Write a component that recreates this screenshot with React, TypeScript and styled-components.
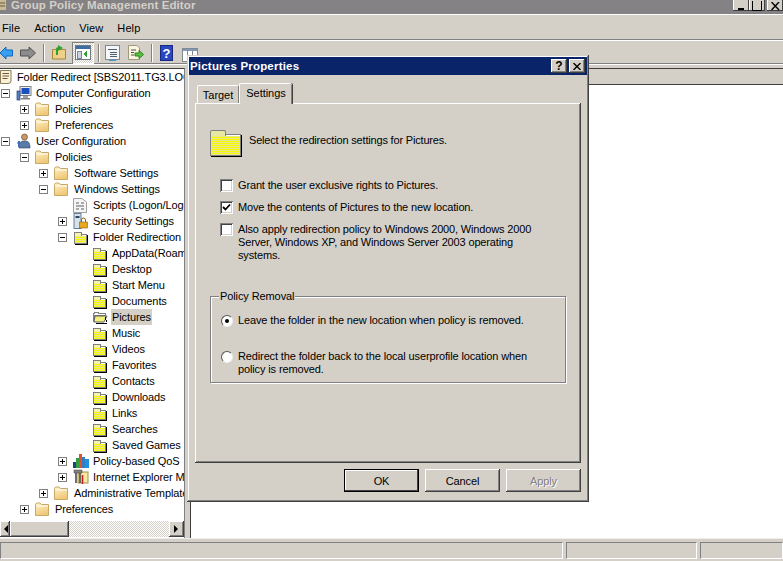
import React from "react";
import styled, { createGlobalStyle } from "styled-components";

const Global = createGlobalStyle`
  html, body { margin: 0; padding: 0; background: #fff; overflow: hidden; }
  * { box-sizing: border-box; }
  body { font-family: "Liberation Sans", Arial, sans-serif; font-size: 11px; color: #000; }
`;

const face = "#d4d0c8";
const raised = "inset -1px -1px 0 #404040, inset 1px 1px 0 #fff, inset -2px -2px 0 #808080";
const dither = "repeating-conic-gradient(#d4d0c8 0 25%, #fff 0 50%) 0 0 / 2px 2px";
const yellowDither = "repeating-conic-gradient(#f8f800 0 25%, #e6e68c 0 50%) 0 0 / 2px 2px";

const Screen = styled.div`
  position: relative; width: 783px; height: 561px; overflow: hidden;
  display: flex; flex-direction: column; background: ${face};
`;
const TitleBar = styled.div`
  height: 14px; background: #848284; display: flex; align-items: center;
  justify-content: space-between; overflow: hidden; flex: none;
`;
const TitleText = styled.div`
  display: flex; align-items: center; gap: 5px; height: 11px; color: ${face};
  font-weight: bold; font-size: 11.5px; letter-spacing: 0.1px; margin-top: -4px; line-height: 11px;
`;
const WindowButtons = styled.div`
  display: flex; align-self: flex-start; height: 11px;
`;
const WindowButton = styled.div<{ $left?: number }>`
  width: 16px; height: 11px; background: ${face}; display: flex; align-items: flex-end; justify-content: center;
  margin-left: ${(p) => p.$left ?? 0}px;
  box-shadow: inset -1px -1px 0 #404040, inset 1px 0 0 #fff;
`;
const MenuBar = styled.div`
  height: 26px; flex: none; display: flex; gap: 14px; padding: 6px 0 0 2px;
  border-top: 1px solid #fff; border-bottom: 1px solid #808080;
  box-shadow: inset 0 1px 0 #d4d0c8; line-height: 14px; font-size: 11px; letter-spacing: 0.1px;
`;
const Toolbar = styled.div`
  height: 25px; flex: none; display: flex; align-items: center;
  border-top: 1px solid #fff; border-bottom: 1px solid #fff; box-shadow: inset 0 -1px 0 #808080;
`;
const ToolSlot = styled.div<{ $left: number; $pressed?: boolean }>`
  margin-left: ${(p) => p.$left}px; display: flex; align-items: center; justify-content: center; flex: none;
  ${(p) =>
    p.$pressed
      ? `width: 22px; height: 22px; background: ${dither}; box-shadow: inset 1px 1px 0 #808080, inset -1px -1px 0 #fff;`
      : ""}
`;
const ToolSep = styled.div<{ $left: number }>`
  margin-left: ${(p) => p.$left}px; width: 2px; height: 18px; flex: none; border-left: 1px solid #808080; border-right: 1px solid #fff;
`;
const Work = styled.div`
  flex: 1; min-height: 0; display: flex; margin-top: 3px;
`;
const TreePane = styled.div`
  width: 185px; flex: none; display: flex; flex-direction: column; background: #fff;
  border-top: 1px solid #404040; border-right: 1px solid #808080;
`;
const TreeList = styled.div`
  flex: 1; min-height: 0; overflow: hidden;
`;
const Row = styled.div<{ $level: number }>`
  height: 16px; display: flex; align-items: center; white-space: nowrap;
  margin-left: ${(p) => p.$level * 19 + 1}px;
`;
const ExpanderSlot = styled.div`
  width: 15px; flex: none; display: flex; align-items: center;
`;
const Expander = styled.div<{ $open: boolean }>`
  position: relative; width: 9px; height: 9px; border: 1px solid #808080; background: #fff;
  &::before { content: ""; position: absolute; left: 1px; top: 3px; width: 5px; height: 1px; background: #000; }
  &::after { content: ""; position: absolute; left: 3px; top: 1px; width: 1px; height: 5px; background: #000;
    display: ${(p) => (p.$open ? "none" : "block")}; }
`;
const IconSlot = styled.div`
  width: 20px; height: 16px; flex: none; display: flex; align-items: center;
`;
const Label = styled.span<{ $selected?: boolean }>`
  height: 16px; line-height: 16px; padding: 0 1.5px; margin-left: -1.5px; font-size: 11px; letter-spacing: -0.1px;
  background: ${(p) => (p.$selected ? face : "transparent")};
`;
const ScrollBar = styled.div`
  height: 16px; flex: none; margin-bottom: 1px; display: flex; background: ${dither};
`;
const ScrollButton = styled.div<{ $w: number }>`
  width: ${(p) => p.$w}px; flex: none; background: ${face}; box-shadow: ${raised};
  display: flex; align-items: center; justify-content: center;
`;
const ScrollThumb = styled.div`
  width: 59px; flex: none; background: ${face}; box-shadow: ${raised};
`;
const ScrollTrack = styled.div`
  flex: 1;
`;
const Splitter = styled.div`
  width: 5px; flex: none; background: ${face};
`;
const RightPane = styled.div`
  flex: 1; display: flex; flex-direction: column; background: #fff; border-left: 1px solid #404040; border-top: 1px solid #404040;
`;
const RightHeader = styled.div`
  height: 16px; flex: none; background: ${face}; border-bottom: 1px solid #404040;
`;
const StatusBar = styled.div`
  height: 23px; flex: none; display: flex; gap: 3px; padding: 3px 0 2px; border-top: 1px solid #eee;
`;
const StatusCell = styled.div<{ $w?: number }>`
  ${(p) => (p.$w ? `width: ${p.$w}px; flex: none;` : "flex: 1;")}
  border-top: 1px solid #808080; border-left: 1px solid #808080; border-bottom: 1px solid #fff; border-right: 1px solid #fff;
`;

/* Dialog: a window lying over the main window */
const Dialog = styled.div`
  position: absolute; left: 187px; top: 55px; width: 402px; height: 447px; padding: 2px;
  background: ${face}; display: flex; flex-direction: column;
  box-shadow: inset -1px -1px 0 #404040, inset 1px 1px 0 #d4d0c8, inset -2px -2px 0 #808080, inset 2px 2px 0 #fff;
`;
const Caption = styled.div`
  height: 18px; flex: none; background: #0a246a; color: #fff; display: flex; align-items: center;
  justify-content: space-between; padding: 0 2px 0 1px; font-weight: bold; font-size: 11.5px; letter-spacing: 0.2px;
`;
const CaptionButtons = styled.div`
  display: flex; gap: 2px;
`;
const CaptionButton = styled.div`
  width: 16px; height: 14px; background: ${face}; box-shadow: ${raised}; color: #000;
  display: flex; align-items: center; justify-content: center; font-weight: bold; font-size: 12px; line-height: 14px;
`;
const TabBar = styled.div`
  height: 20px; margin-top: 8px; padding-left: 8px; flex: none; display: flex; align-items: flex-end; position: relative; z-index: 1;
`;
const Tab = styled.div<{ $active?: boolean; $w: number }>`
  width: ${(p) => p.$w}px; height: ${(p) => (p.$active ? 21 : 18)}px; background: ${face};
  margin-bottom: ${(p) => (p.$active ? -1 : 0)}px;
  display: flex; align-items: center; justify-content: center; padding-bottom: ${(p) => (p.$active ? 3 : 0)}px;
  border-top: 1px solid #fff; border-left: 1px solid #fff; font-size: 11px; letter-spacing: -0.05px;
  border-radius: 2px 2px 0 0;
  ${(p) => (p.$active ? "box-shadow: inset -1px 0 0 #808080, 1px 0 0 #404040;" : "border-right: 1px solid #808080;")}
`;
const Panel = styled.div`
  margin: 0 6px; height: 360px; flex: none; padding: 26px 15px 0;
  box-shadow: inset -1px -1px 0 #404040, inset 1px 1px 0 #fff, inset -2px -2px 0 #808080;
  display: flex; flex-direction: column;
`;
const HeaderRow = styled.div`
  display: flex; align-items: flex-start; gap: 8px; height: 27px; font-size: 11px; letter-spacing: -0.18px;
  line-height: 13px;
`;
const HeaderText = styled.span`
  padding-top: 5px;
`;
const Options = styled.div`
  margin: 23px 0 0 10px; width: 318px; display: flex; flex-direction: column; gap: 9px;
`;
const Option = styled.div`
  display: flex; gap: 5px; align-items: flex-start; line-height: 13px; font-size: 11px; letter-spacing: -0.15px;
`;
const Check = styled.div`
  width: 13px; height: 13px; flex: none; background: #fff; display: flex; align-items: center; justify-content: center;
  box-shadow: inset 1px 1px 0 #808080, inset -1px -1px 0 #fff, inset 2px 2px 0 #404040, inset -2px -2px 0 #d4d0c8;
`;
const Group = styled.div`
  position: relative; margin-top: 34px; width: 356px; height: 87px; padding: 17px 0 0 10px;
  border: 1px solid #808080; box-shadow: 1px 1px 0 #fff, inset 1px 1px 0 #fff;
  display: flex; flex-direction: column; gap: 23px;
`;
const Legend = styled.div`
  position: absolute; left: 8px; top: -7px; padding: 0 1px; line-height: 13px; background: ${face}; font-size: 11px; letter-spacing: -0.1px;
`;
const RadioRow = styled.div`
  display: flex; gap: 5px; align-items: flex-start; line-height: 13px; font-size: 11px; letter-spacing: -0.13px; width: 320px;
`;
const Radio = styled.div<{ $on?: boolean }>`
  width: 12px; height: 12px; flex: none; border-radius: 50%; background: #fff; margin-top: 1px;
  border: 1px solid; border-color: #555 #eee #eee #555;
  display: flex; align-items: center; justify-content: center;
  &::after { content: ""; width: 4px; height: 4px; border-radius: 50%; background: ${(p) => (p.$on ? "#000" : "transparent")}; }
`;
const ButtonRow = styled.div`
  display: flex; justify-content: flex-end; gap: 6px; margin: 6px 6px 0 0;
`;
const PushButton = styled.div<{ $default?: boolean; $disabled?: boolean }>`
  width: 75px; height: 23px; display: flex; align-items: center; justify-content: center; font-size: 11px; letter-spacing: -0.1px;
  background: ${face}; color: ${(p) => (p.$disabled ? "#808080" : "#000")};
  ${(p) => (p.$disabled ? "text-shadow: 1px 1px 0 #fff;" : "")}
  box-shadow: ${(p) =>
    p.$default
      ? "inset 0 0 0 1px #000, inset -2px -2px 0 #404040, inset 2px 2px 0 #fff"
      : raised};
`;

/* Dithered yellow folders drawn as CSS shapes: body, tab on top, hard black shadow */
const YellowFolder = styled.div`
  position: relative; width: 13px; height: 10px; margin: 3px 0 0 1px;
  border: 1px solid #808080; background: ${yellowDither};
  box-shadow: 1px 1px 0 #000, inset 0 1px 0 #fff;
  &::before {
    content: ""; position: absolute; left: -1px; top: -3px; width: 6px; height: 3px;
    background: #f4f4b0; border: 1px solid #808080; border-bottom: none;
  }
`;
const BigFolder = styled.div`
  position: relative; width: 31px; height: 22px; margin-top: 5px; flex: none;
  border: 1px solid #808080; background: ${yellowDither};
  box-shadow: 1px 1px 0 #000, inset 0 1px 0 #fff;
  &::before {
    content: ""; position: absolute; left: -1px; top: -5px; width: 14px; height: 5px;
    background: #e8e8a0; border: 1px solid #808080; border-bottom: none; border-radius: 2px 2px 0 0;
  }
`;

/* ---- Icons ---- */
const Gradients = () => (
  <svg width="0" height="0" style={{ position: "absolute" }}>
    <defs>
      <linearGradient id="tan" x1="0" y1="0" x2="0.4" y2="1">
        <stop offset="0" stopColor="#fff3c8" />
        <stop offset="1" stopColor="#f0c878" />
      </linearGradient>
    </defs>
  </svg>
);
const TanFolder = () => (
  <svg width="15" height="14" viewBox="0 0 15 14">
    <path d="M0.5 2.5 L1.5 1 H5 L6.5 2.5 H13.5 V13.5 H0.5 Z" fill="url(#tan)" stroke="#c8a868" />
    <path d="M1.5 4 H13" stroke="#fff" />
  </svg>
);
const OpenYellowFolder = () => (
  <svg width="16" height="14" viewBox="0 0 16 14" shapeRendering="crispEdges">
    <path d="M1 12 V3 H2 V2 H6 V3 H13 V5 H3 Z" fill="#fff" stroke="#808080" strokeWidth="1" />
    <path d="M3 6 H15 L12 12 H2 Z" fill="#f2f27a" stroke="#606060" shapeRendering="auto" />
    <path d="M13.5 7 L14.5 12 M4 13.5 H14.5" stroke="#000" />
  </svg>
);
const ComputerIcon = () => (
  <svg width="16" height="15" viewBox="0 0 16 15">
    <rect x="4" y="0.5" width="11" height="9" fill="#e8eef4" stroke="#808080" />
    <rect x="5.5" y="2" width="8" height="6" fill="#1c50c0" />
    <rect x="7" y="10" width="5" height="2" fill="#a0a0a0" />
    <rect x="5" y="12" width="9" height="1.5" fill="#808080" />
    <rect x="1" y="5" width="3" height="9" fill="#5080c0" stroke="#204080" strokeWidth="0.7" />
  </svg>
);
const UserIcon = () => (
  <svg width="15" height="16" viewBox="0 0 15 16">
    <circle cx="8.5" cy="4" r="3" fill="#c89868" stroke="#604020" strokeWidth="0.6" />
    <path d="M3 15 C3 9 5 8 8.5 8 C12 8 14 9 14 15 Z" fill="#5a7aa8" stroke="#304060" strokeWidth="0.6" />
    <path d="M3 8 V14 M1.5 10 H4.5 " stroke="#4070c0" strokeWidth="2" />
  </svg>
);
const ScriptIcon = () => (
  <svg width="14" height="15" viewBox="0 0 14 15">
    <path d="M0.5 0.5 H9 L13.5 4 V14.5 H0.5 Z" fill="#f4f4f4" stroke="#a0a0a0" />
    <path d="M3 5 H6 M8 5 H11 M3 8 H11 M3 11 H6 M8 11 H11" stroke="#606060" />
  </svg>
);
const SecurityIcon = () => (
  <svg width="15" height="16" viewBox="0 0 15 16">
    <rect x="1" y="0.5" width="7" height="15" fill="#d8e0e8" stroke="#6080a0" />
    <rect x="2.5" y="3" width="4" height="2" fill="#304860" />
    <rect x="6.5" y="9" width="8" height="6" fill="#e8a820" stroke="#906010" strokeWidth="0.6" />
    <path d="M8.5 9 V7 A2 2 0 0 1 12.5 7 V9" fill="none" stroke="#906010" />
  </svg>
);
const QosIcon = () => (
  <svg width="16" height="16" viewBox="0 0 16 16" shapeRendering="crispEdges">
    <rect x="0" y="9" width="4" height="6" fill="#204080" />
    <rect x="3" y="5" width="3" height="10" fill="#30a040" />
    <rect x="6" y="1" width="3" height="14" fill="#e05030" />
    <rect x="9" y="4" width="3" height="11" fill="#3080c0" />
    <rect x="12" y="6" width="4" height="9" fill="#2090e0" />
  </svg>
);
const IeIcon = () => (
  <svg width="16" height="16" viewBox="0 0 16 16">
    <rect x="5" y="3" width="10" height="11" fill="#f8e8a0" stroke="#a09050" />
    <rect x="1" y="1" width="8" height="3" fill="#808080" stroke="#404040" strokeWidth="0.5" />
    <path d="M3 4 V14 M7 4 V14" stroke="#404040" strokeWidth="1.5" />
    <path d="M9.5 6 V15" stroke="#c02020" strokeWidth="1.6" />
  </svg>
);
const RootIcon = () => (
  <svg width="15" height="16" viewBox="0 0 15 16">
    <path d="M3.5 1.5 H14 V12 Q14 14.5 11 14.5 H3.5 Z" fill="#f8f0d8" stroke="#8c7c58" />
    <path d="M5.5 4.5 H12 M5.5 7 H12 M5.5 9.5 H10.5" stroke="#705830" />
  </svg>
);
const BackIcon = () => (
  <svg width="13" height="14" viewBox="0 0 13 14">
    <path d="M0 7 L6 1 V4 H12.5 V10 H6 V13 Z" fill="#38a0f0" stroke="#1068c0" />
  </svg>
);
const ForwardIcon = () => (
  <svg width="16" height="14" viewBox="0 0 16 14">
    <path d="M15.5 7 L9 1 V4 H0.5 V10 H9 V13 Z" fill="#8c8c8c" stroke="#505050" />
  </svg>
);
const UpIcon = () => (
  <svg width="15" height="15" viewBox="0 0 15 15">
    <path d="M0.5 4.5 H13.5 V14 H0.5 Z" fill="#f0d088" stroke="#a88838" />
    <path d="M5 10 V4 Q5 3 7 3" fill="none" stroke="#30a030" strokeWidth="2" />
    <path d="M6 0 L11 3 L6 6 Z" fill="#30a030" />
  </svg>
);
const TreeToggleIcon = () => (
  <svg width="16" height="16" viewBox="0 0 16 16" shapeRendering="crispEdges">
    <rect x="0.5" y="0.5" width="15" height="14" fill="#fff" stroke="#707880" />
    <rect x="1" y="1" width="14" height="3" fill="#3a6ea5" />
    <rect x="2" y="6" width="4" height="7" fill="#c8d4e0" stroke="#7088a0" />
    <path d="M12 6 V12 L8 9 Z" fill="#30a030" />
  </svg>
);
const ListIcon = () => (
  <svg width="15" height="16" viewBox="0 0 15 16" shapeRendering="crispEdges">
    <rect x="0.5" y="0.5" width="14" height="14" fill="#f4f6f8" stroke="#808890" />
    <path d="M3 4 H12 M5 7 H12 M5 9 H12 M5 11 H12" stroke="#506070" />
    <rect x="4" y="15" width="7" height="1" fill="#30a0e0" />
  </svg>
);
const ExportIcon = () => (
  <svg width="16" height="16" viewBox="0 0 16 16">
    <path d="M0.5 0.5 H9 L11.5 3 V14.5 H0.5 Z" fill="#fbf6e0" stroke="#a09880" />
    <path d="M3 5 H8 M3 7.5 H6 M3 10 H6" stroke="#505050" />
    <path d="M7 8 H11 V5.5 L15.5 9.5 L11 13.5 V11 H7 Z" fill="#58c040" stroke="#308020" />
  </svg>
);
const HelpIcon = () => (
  <svg width="13" height="16" viewBox="0 0 13 16">
    <rect x="0.5" y="0.5" width="12" height="15" fill="#2848c0" stroke="#182880" />
    <text x="6.5" y="13" textAnchor="middle" fontSize="13" fontWeight="bold" fill="#fff" fontFamily="Liberation Sans">?</text>
  </svg>
);
const WindowIcon = () => (
  <svg width="16" height="18" viewBox="0 -4 16 18" shapeRendering="crispEdges">
    <rect x="0.5" y="0.5" width="15" height="13" fill="#fff" stroke="#808890" />
    <rect x="1" y="1" width="14" height="2" fill="#8098b8" />
    <path d="M5.5 3 V14 M10.5 3 V14" stroke="#808890" />
  </svg>
);
const ArrowTri = ({ left }: { left?: boolean }) => (
  <svg width="5" height="8" viewBox="0 0 5 8">
    <path d={left ? "M5 0 V8 L1 4 Z" : "M0 0 V8 L4 4 Z"} fill="#000" />
  </svg>
);
const CloseGlyph = ({ size = 8 }: { size?: number }) => (
  <svg width={size} height={size - 1} viewBox="0 0 8 7">
    <path d="M0.5 0 L7.5 7 M7.5 0 L0.5 7" stroke="#000" strokeWidth="1.4" />
  </svg>
);

type Kind = "root" | "computer" | "user" | "tan" | "yellow" | "open" | "script" | "security" | "qos" | "ie";
const icons: Record<Kind, React.ReactNode> = {
  root: <RootIcon />, computer: <ComputerIcon />, user: <UserIcon />, tan: <TanFolder />, yellow: <YellowFolder />,
  open: <OpenYellowFolder />, script: <ScriptIcon />, security: <SecurityIcon />, qos: <QosIcon />, ie: <IeIcon />,
};
type Item = { level: number; exp?: "+" | "-"; icon: Kind; label: string; selected?: boolean };
const tree: Item[] = [
  { level: -1, icon: "root", label: "Folder Redirect [SBS2011.TG3.LOCAL] Policy" },
  { level: 0, exp: "-", icon: "computer", label: "Computer Configuration" },
  { level: 1, exp: "+", icon: "tan", label: "Policies" },
  { level: 1, exp: "+", icon: "tan", label: "Preferences" },
  { level: 0, exp: "-", icon: "user", label: "User Configuration" },
  { level: 1, exp: "-", icon: "tan", label: "Policies" },
  { level: 2, exp: "+", icon: "tan", label: "Software Settings" },
  { level: 2, exp: "-", icon: "tan", label: "Windows Settings" },
  { level: 3, icon: "script", label: "Scripts (Logon/Logoff)" },
  { level: 3, exp: "+", icon: "security", label: "Security Settings" },
  { level: 3, exp: "-", icon: "yellow", label: "Folder Redirection" },
  { level: 4, icon: "yellow", label: "AppData(Roaming)" },
  { level: 4, icon: "yellow", label: "Desktop" },
  { level: 4, icon: "yellow", label: "Start Menu" },
  { level: 4, icon: "yellow", label: "Documents" },
  { level: 4, icon: "open", label: "Pictures", selected: true },
  { level: 4, icon: "yellow", label: "Music" },
  { level: 4, icon: "yellow", label: "Videos" },
  { level: 4, icon: "yellow", label: "Favorites" },
  { level: 4, icon: "yellow", label: "Contacts" },
  { level: 4, icon: "yellow", label: "Downloads" },
  { level: 4, icon: "yellow", label: "Links" },
  { level: 4, icon: "yellow", label: "Searches" },
  { level: 4, icon: "yellow", label: "Saved Games" },
  { level: 3, exp: "+", icon: "qos", label: "Policy-based QoS" },
  { level: 3, exp: "+", icon: "ie", label: "Internet Explorer Maintenance" },
  { level: 2, exp: "+", icon: "tan", label: "Administrative Templates" },
  { level: 1, exp: "+", icon: "tan", label: "Preferences" },
];

export default function App() {
  return (
    <Screen>
      <Global />
      <Gradients />
      <TitleBar>
        <TitleText>
          <svg width="6" height="10" viewBox="0 0 6 10">
            <path d="M0 0 H6 V10 H0 Z" fill="#c8bc98" />
            <path d="M0 3 H5 M0 6 H5" stroke="#705830" />
          </svg>
          Group Policy Management Editor
        </TitleText>
        <WindowButtons>
          <WindowButton>
            <svg width="8" height="5" viewBox="0 0 8 5"><rect x="1" y="2" width="6" height="2" fill="#000" /></svg>
          </WindowButton>
          <WindowButton>
            <svg width="10" height="10" viewBox="0 0 10 10" fill="none"><path d="M0.5 9.5 V0 M9.5 0 V9.5 H0.5" stroke="#000" /></svg>
          </WindowButton>
          <WindowButton $left={2}>
            <svg width="9" height="9" viewBox="0 0 9 9"><path d="M0.5 0 L8 8 M8 0 L0.5 8" stroke="#000" strokeWidth="1.4" /></svg>
          </WindowButton>
        </WindowButtons>
      </TitleBar>
      <MenuBar>
        <span>File</span>
        <span>Action</span>
        <span>View</span>
        <span>Help</span>
      </MenuBar>
      <Toolbar>
        <ToolSlot $left={0}><BackIcon /></ToolSlot>
        <ToolSlot $left={7}><ForwardIcon /></ToolSlot>
        <ToolSep $left={7} />
        <ToolSlot $left={7}><UpIcon /></ToolSlot>
        <ToolSlot $left={5} $pressed><TreeToggleIcon /></ToolSlot>
        <ToolSep $left={4} />
        <ToolSlot $left={5}><ListIcon /></ToolSlot>
        <ToolSlot $left={8}><ExportIcon /></ToolSlot>
        <ToolSep $left={7} />
        <ToolSlot $left={7}><HelpIcon /></ToolSlot>
        <ToolSlot $left={9}><WindowIcon /></ToolSlot>
      </Toolbar>
      <Work>
        <TreePane>
          <TreeList>
            {tree.map((t, i) => (
              <Row key={i} $level={t.level}>
                <ExpanderSlot>{t.exp && <Expander $open={t.exp === "-"} />}</ExpanderSlot>
                <IconSlot>{icons[t.icon]}</IconSlot>
                <Label $selected={t.selected}>{t.label}</Label>
              </Row>
            ))}
          </TreeList>
          <ScrollBar>
            <ScrollButton $w={10}><ArrowTri left /></ScrollButton>
            <ScrollThumb />
            <ScrollTrack />
            <ScrollButton $w={15}><ArrowTri /></ScrollButton>
          </ScrollBar>
        </TreePane>
        <Splitter />
        <RightPane>
          <RightHeader />
        </RightPane>
      </Work>
      <StatusBar>
        <StatusCell />
        <StatusCell $w={131} />
        <StatusCell $w={83} />
      </StatusBar>

      <Dialog>
        <Caption>
          <span>Pictures Properties</span>
          <CaptionButtons>
            <CaptionButton>?</CaptionButton>
            <CaptionButton><CloseGlyph /></CaptionButton>
          </CaptionButtons>
        </Caption>
        <TabBar>
          <Tab $w={42}>Target</Tab>
          <Tab $w={53} $active>Settings</Tab>
        </TabBar>
        <Panel>
          <HeaderRow>
            <BigFolder />
            <HeaderText>Select the redirection settings for Pictures.</HeaderText>
          </HeaderRow>
          <Options>
            <Option><Check /><span>Grant the user exclusive rights to Pictures.</span></Option>
            <Option>
              <Check>
                <svg width="9" height="9" viewBox="0 0 9 9"><path d="M1 4 L3.5 6.5 L8 1.5" fill="none" stroke="#000" strokeWidth="1.8" /></svg>
              </Check>
              <span>Move the contents of Pictures to the new location.</span>
            </Option>
            <Option>
              <Check />
              <span>Also apply redirection policy to Windows 2000, Windows 2000 Server, Windows XP, and Windows Server 2003 operating systems.</span>
            </Option>
          </Options>
          <Group>
            <Legend>Policy Removal</Legend>
            <RadioRow><Radio $on /><span>Leave the folder in the new location when policy is removed.</span></RadioRow>
            <RadioRow><Radio /><span>Redirect the folder back to the local userprofile location when policy is removed.</span></RadioRow>
          </Group>
        </Panel>
        <ButtonRow>
          <PushButton $default>OK</PushButton>
          <PushButton>Cancel</PushButton>
          <PushButton $disabled>Apply</PushButton>
        </ButtonRow>
      </Dialog>
    </Screen>
  );
}
